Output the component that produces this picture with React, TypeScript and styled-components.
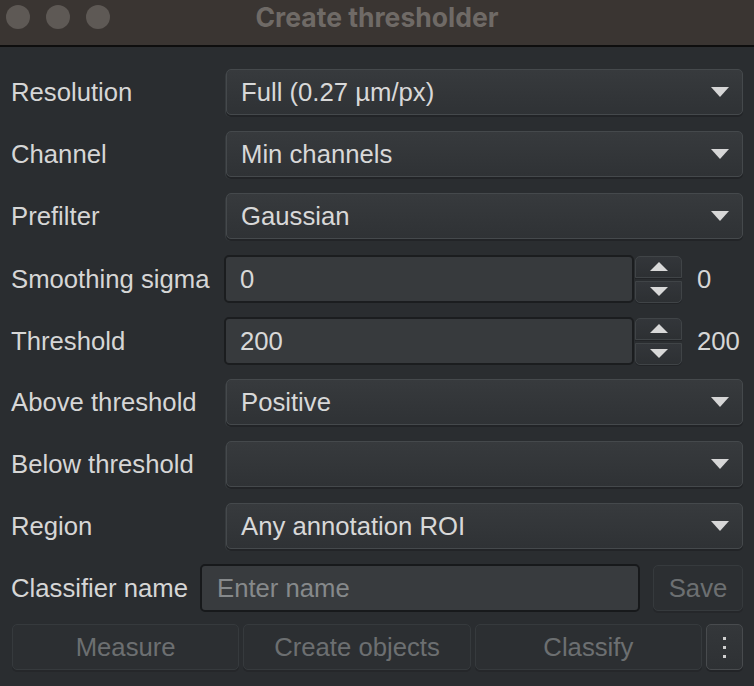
import React from 'react'
import styled, { createGlobalStyle } from 'styled-components'

const GlobalStyle = createGlobalStyle`
  html, body {
    margin: 0;
    padding: 0;
    background: #2a2d30;
  }
  * {
    box-sizing: border-box;
  }
`

type ComboRow = { label: string; value: string }
type SpinRow = { label: string; value: string }

const topCombos: ComboRow[] = [
  { label: 'Resolution', value: 'Full (0.27 µm/px)' },
  { label: 'Channel', value: 'Min channels' },
  { label: 'Prefilter', value: 'Gaussian' }
]

const spinners: SpinRow[] = [
  { label: 'Smoothing sigma', value: '0' },
  { label: 'Threshold', value: '200' }
]

const bottomCombos: ComboRow[] = [
  { label: 'Above threshold', value: 'Positive' },
  { label: 'Below threshold', value: '' },
  { label: 'Region', value: 'Any annotation ROI' }
]

function Combo({ label, value }: ComboRow) {
  return (
    <Row>
      <Label>{label}</Label>
      <ComboBox>
        <ComboText>{value}</ComboText>
        <Arrow width="18" height="10" viewBox="0 0 18 10">
          <path d="M0 0 L18 0 L9 10 Z" fill="#d6d6d6" />
        </Arrow>
      </ComboBox>
    </Row>
  )
}

function Spinner({ label, value }: SpinRow) {
  return (
    <Row>
      <Label>{label}</Label>
      <SpinGroup>
        <TextField>{value}</TextField>
        <SpinButtons>
          <SpinButton $up>
            <svg width="18" height="9" viewBox="0 0 18 9">
              <path d="M9 0 L18 9 L0 9 Z" fill="#d8d8d8" />
            </svg>
          </SpinButton>
          <SpinButton>
            <svg width="18" height="9" viewBox="0 0 18 9">
              <path d="M0 0 L18 0 L9 9 Z" fill="#d8d8d8" />
            </svg>
          </SpinButton>
        </SpinButtons>
        <SpinValue>{value}</SpinValue>
      </SpinGroup>
    </Row>
  )
}

export default function App() {
  return (
    <Window>
      <GlobalStyle />
      <TitleBar>
        <Lights>
          <Light />
          <Light />
          <Light />
        </Lights>
        <Title>Create thresholder</Title>
      </TitleBar>
      <Body>
        {topCombos.map(c => (
          <Combo key={c.label} {...c} />
        ))}
        {spinners.map(s => (
          <Spinner key={s.label} {...s} />
        ))}
        {bottomCombos.map(c => (
          <Combo key={c.label} {...c} />
        ))}
        <NameRow>
          <Label>Classifier name</Label>
          <NameField>Enter name</NameField>
          <SaveButton>Save</SaveButton>
        </NameRow>
        <ButtonRow>
          <ActionButton>Measure</ActionButton>
          <ActionButton>Create objects</ActionButton>
          <ActionButton>Classify</ActionButton>
          <MoreButton>
            <Dot />
            <Dot />
            <Dot />
          </MoreButton>
        </ButtonRow>
      </Body>
    </Window>
  )
}

const Window = styled.div`
  width: 754px;
  height: 686px;
  background: #2a2d30;
  font-family: 'Liberation Sans', Arial, sans-serif;
  font-size: 25.7px;
  overflow: hidden;
`

const TitleBar = styled.div`
  position: relative;
  height: 47px;
  background: #3a3532;
  border-bottom: 2px solid #0e0e0e;
  display: flex;
  align-items: center;
  justify-content: center;
`

const Lights = styled.div`
  position: absolute;
  left: 6px;
  top: 5px;
  display: flex;
  gap: 16px;
`

const Light = styled.div`
  width: 24px;
  height: 24px;
  border-radius: 50%;
  background: #5e5955;
`

const Title = styled.div`
  margin-top: -12px;
  font-family: Inter, 'Liberation Sans', sans-serif;
  font-weight: 700;
  font-size: 26.5px;
  color: #6f6a66;
`

const Body = styled.div`
  display: flex;
  flex-direction: column;
  gap: 16px;
  padding: 22px 11px 0 11px;
`

const Row = styled.div`
  display: grid;
  grid-template-columns: 213px 1fr;
  align-items: center;
  height: 46px;
`

const Label = styled.div`
  color: #d6d6d6;
  white-space: nowrap;
`

const ComboBox = styled.div`
  height: 46px;
  margin-left: 2px;
  display: flex;
  align-items: center;
  justify-content: space-between;
  padding: 0 13px 0 14px;
  border: 1px solid #45494c;
  border-radius: 5px;
  background: linear-gradient(#373a3d, #2f3235);
  box-shadow: 0 2px 0 0 #222427, -1px 2px 0 0 #363a3d;
`

const ComboText = styled.div`
  color: #d8d8d8;
`

const Arrow = styled.svg`
  flex-shrink: 0;
`

const SpinGroup = styled.div`
  display: grid;
  grid-template-columns: 1fr 48px 61px;
  align-items: center;
`

const TextField = styled.div`
  height: 48px;
  display: flex;
  align-items: center;
  padding-left: 14px;
  border: 2px solid #1b1d1f;
  border-radius: 5px;
  background: #373a3d;
  color: #d8d8d8;
`

const SpinButtons = styled.div`
  display: flex;
  flex-direction: column;
  gap: 3px;
  margin-left: 1px;
`

const SpinButton = styled.div<{ $up?: boolean }>`
  height: 22px;
  display: flex;
  align-items: center;
  justify-content: center;
  border: 1px solid #404447;
  border-radius: ${p => (p.$up ? '5px 5px 0 0' : '0 0 5px 5px')};
  background: linear-gradient(#33363a, #2d3033);
  box-shadow: 0 1px 0 #222427;
`

const SpinValue = styled.div`
  padding-left: 15px;
  color: #d6d6d6;
`

const NameRow = styled.div`
  display: flex;
  align-items: center;
  gap: 12px;
  height: 46px;
`

const NameField = styled.div`
  flex: 1;
  height: 48px;
  display: flex;
  align-items: center;
  padding-left: 15px;
  border: 2px solid #17191b;
  border-radius: 5px;
  background: #383b3e;
  color: #86898b;
`

const SaveButton = styled.div`
  width: 90px;
  height: 46px;
  margin-left: 1px;
  display: flex;
  align-items: center;
  justify-content: center;
  border: 1px solid #363a3d;
  border-radius: 5px;
  background: #2c2f32;
  box-shadow: 0 2px 0 #25272a;
  color: #6c6f71;
`

const ButtonRow = styled.div`
  display: grid;
  grid-template-columns: 1fr 1fr 1fr 37px;
  gap: 4px;
  height: 46px;
  margin-top: -3px;
  padding-left: 1px;
`

const ActionButton = styled.div`
  display: flex;
  align-items: center;
  justify-content: center;
  border: 1px solid #363a3d;
  border-radius: 5px;
  background: #2c2f32;
  box-shadow: 0 2px 0 #25272a;
  color: #6c6f71;
`

const MoreButton = styled.div`
  display: flex;
  flex-direction: column;
  align-items: center;
  justify-content: center;
  gap: 6px;
  border: 1px solid #484b4e;
  border-radius: 5px;
  background: linear-gradient(#34373a, #2e3134);
  box-shadow: 0 2px 0 #222427;
`

const Dot = styled.div`
  width: 3px;
  height: 3px;
  background: #cfcfcf;
`
